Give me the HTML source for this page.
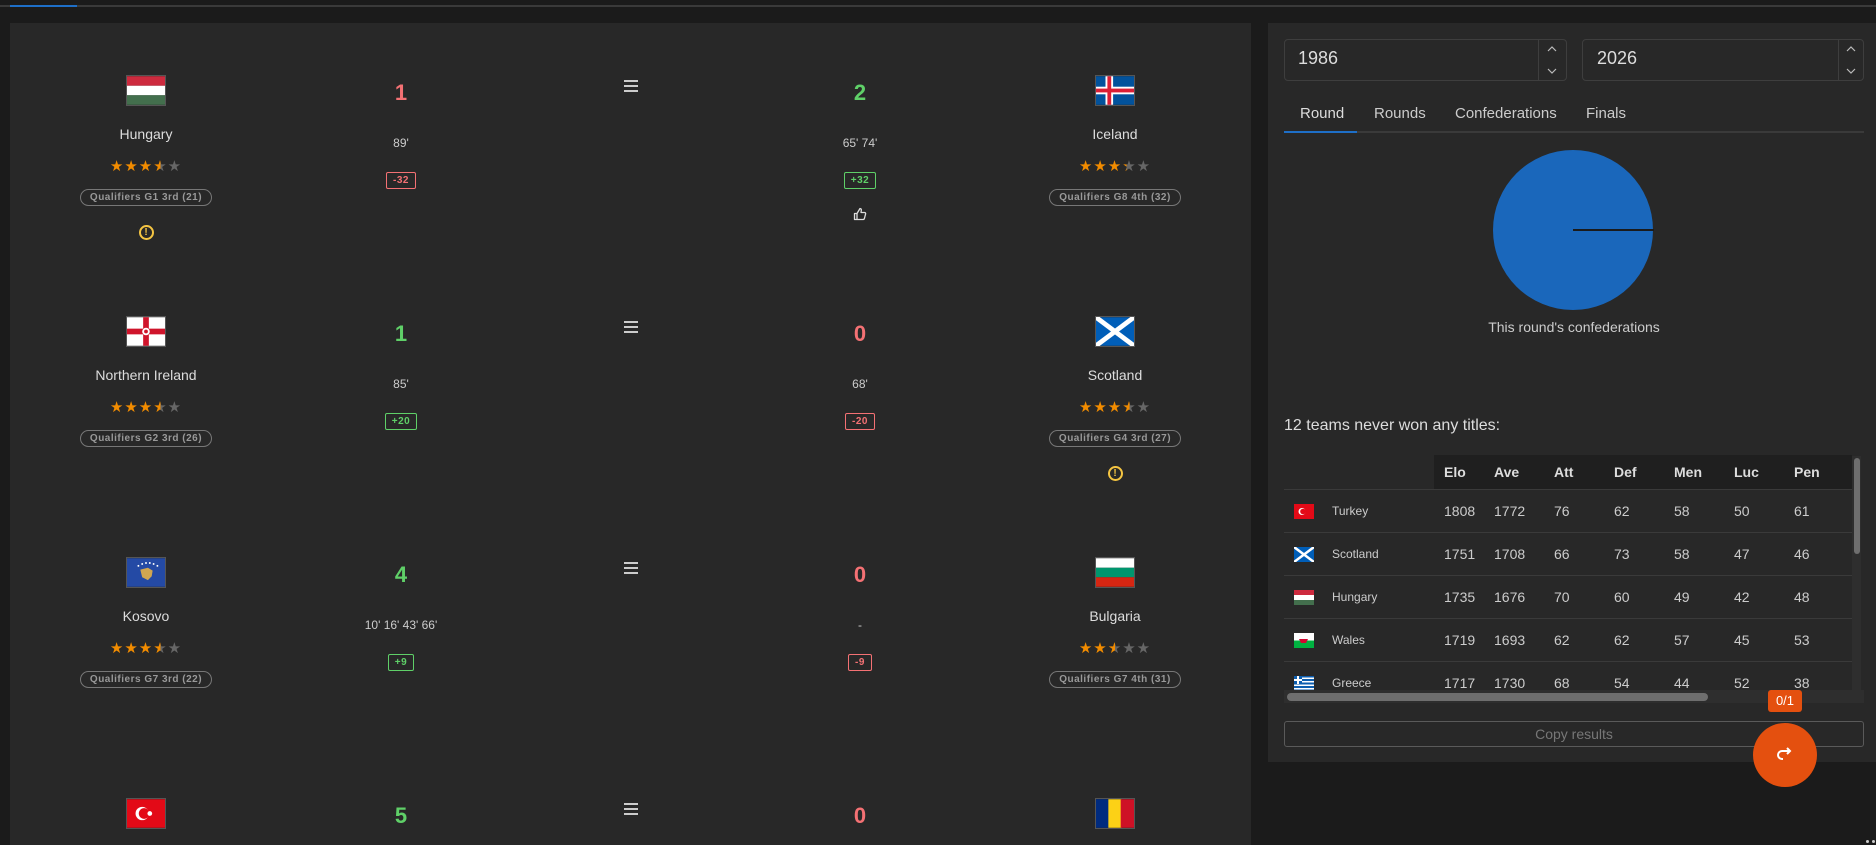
<!DOCTYPE html>
<html><head><meta charset="utf-8"><style>
*{margin:0;padding:0;box-sizing:border-box}
body{width:1876px;height:845px;background:#1b1b1b;font-family:"Liberation Sans",sans-serif;color:#ddd;position:relative;overflow:hidden}
.a{position:absolute}
.c{position:absolute;width:260px;text-align:center}
.flag{display:block;margin:0 auto;width:40px;height:31px;border:1px solid #555}
.name{font-size:14px;color:#ddd;margin-top:20px}
.stars{font-size:15px;letter-spacing:1px;color:#f28c00;margin-top:15px}
.stars .g{color:#666}
.bw{margin-top:12px}
.badge{display:inline-block;border:1px solid #777;border-radius:9px;font-size:10px;font-weight:bold;color:#999;padding:1px 9px;line-height:13px;letter-spacing:0.5px}
.score{font-size:22px;font-weight:bold}
.red{color:#f47174}.green{color:#5fd068}
.min{font-size:12px;color:#ccc;margin-top:30px}
.dw{margin-top:20px}
.delta{display:inline-block;font-size:10px;font-weight:bold;border:1px solid;border-radius:2px;padding:1px 6px;line-height:13px;letter-spacing:0.5px}
.warn{display:inline-block;width:15px;height:15px;border:2px solid #f5c542;border-radius:50%;color:#f5c542;font-size:10px;font-weight:bold;line-height:11px}
.menu{position:absolute;width:14px;height:12px;border-top:2px solid #ccc;border-bottom:2px solid #ccc}
.menu:after{content:"";position:absolute;left:0;right:0;top:3px;border-top:2px solid #ccc}
table{border-collapse:collapse;font-size:14px;color:#ccc}
td,th{height:43px;text-align:left;padding:0}
th{height:34px;font-weight:bold;color:#ddd;background:#1f1f1f}
tr{border-bottom:1px solid #3a3a3a}
</style></head><body>
<div class="a" style="left:0;top:5px;width:1876px;height:2px;background:#3a3a3a"></div>
<div class="a" style="left:10px;top:5px;width:67px;height:2px;background:#1e6fc8"></div>

<div class="a" style="left:10px;top:23px;width:1241px;height:822px;background:#282828"></div>

<!-- ROW 1 -->
<div class="c" style="left:16px;top:75px">
<svg class="flag" viewBox="0 0 40 30"><rect width="40" height="10" fill="#cd2a3e"/><rect y="10" width="40" height="10" fill="#fff"/><rect y="20" width="40" height="10" fill="#436f4d"/></svg>
<div class="name">Hungary</div>
<div class="stars">★★★<span style="background:linear-gradient(90deg,#f28c00 50%,#666 50%);-webkit-background-clip:text;color:transparent">★</span><span class="g">★</span></div>
<div class="bw"><span class="badge">Qualifiers G1 3rd (21)</span></div>
<div style="margin-top:16px"><span class="warn">!</span></div>
</div>
<div class="c" style="left:271px;top:80px"><div class="score red">1</div><div class="min">89'</div><div class="dw"><span class="delta red">-32</span></div></div>
<div class="menu" style="left:624px;top:80px"></div>
<div class="c" style="left:730px;top:80px"><div class="score green">2</div><div class="min">65' 74'</div><div class="dw"><span class="delta green">+32</span></div><div style="margin-top:18px"><svg width="14" height="14" viewBox="0 0 14 14"><path d="M1.5 6.5h2.5v6h-2.5zM4 6.5l3-5c1 0 1.5 .7 1.3 1.8L8 5.5h3.5c.8 0 1.3.7 1.1 1.4l-1.2 4.6c-.2.6-.6 1-1.2 1H4" fill="none" stroke="#ddd" stroke-width="1.3" stroke-linejoin="round"/></svg></div></div>
<div class="c" style="left:985px;top:75px">
<svg class="flag" viewBox="0 0 40 30"><rect width="40" height="30" fill="#02529c"/><rect x="10" width="8" height="30" fill="#fff"/><rect y="11" width="40" height="8" fill="#fff"/><rect x="12" width="4" height="30" fill="#dc1e35"/><rect y="13" width="40" height="4" fill="#dc1e35"/></svg>
<div class="name">Iceland</div>
<div class="stars">★★★<span style="background:linear-gradient(90deg,#f28c00 30%,#666 30%);-webkit-background-clip:text;color:transparent">★</span><span class="g">★</span></div>
<div class="bw"><span class="badge">Qualifiers G8 4th (32)</span></div>
</div>

<!-- ROW 2 -->
<div class="c" style="left:16px;top:316px">
<svg class="flag" viewBox="0 0 40 30"><rect width="40" height="30" fill="#fff"/><rect x="17" width="6" height="30" fill="#cf142b"/><rect y="12" width="40" height="6" fill="#cf142b"/><circle cx="20" cy="15" r="4" fill="#fff"/><circle cx="20" cy="15" r="2" fill="#cf142b"/></svg>
<div class="name">Northern Ireland</div>
<div class="stars">★★★<span style="background:linear-gradient(90deg,#f28c00 50%,#666 50%);-webkit-background-clip:text;color:transparent">★</span><span class="g">★</span></div>
<div class="bw"><span class="badge">Qualifiers G2 3rd (26)</span></div>
</div>
<div class="c" style="left:271px;top:321px"><div class="score green">1</div><div class="min">85'</div><div class="dw"><span class="delta green">+20</span></div></div>
<div class="menu" style="left:624px;top:321px"></div>
<div class="c" style="left:730px;top:321px"><div class="score red">0</div><div class="min red">68'</div><div class="dw"><span class="delta red">-20</span></div></div>
<div class="c" style="left:985px;top:316px">
<svg class="flag" viewBox="0 0 40 30"><rect width="40" height="30" fill="#005eb8"/><path d="M0 0L40 30M40 0L0 30" stroke="#fff" stroke-width="5"/></svg>
<div class="name">Scotland</div>
<div class="stars">★★★<span style="background:linear-gradient(90deg,#f28c00 50%,#666 50%);-webkit-background-clip:text;color:transparent">★</span><span class="g">★</span></div>
<div class="bw"><span class="badge">Qualifiers G4 3rd (27)</span></div>
<div style="margin-top:16px"><span class="warn">!</span></div>
</div>

<!-- ROW 3 -->
<div class="c" style="left:16px;top:557px">
<svg class="flag" viewBox="0 0 40 30"><rect width="40" height="30" fill="#244aa5"/><path d="M14 12l8 -2 5 3 -1 6 -4 4 -6 -3z" fill="#d0a650"/><g fill="#fff"><circle cx="12" cy="8" r="1"/><circle cx="16" cy="6" r="1"/><circle cx="20" cy="5" r="1"/><circle cx="24" cy="5" r="1"/><circle cx="28" cy="6" r="1"/><circle cx="32" cy="8" r="1"/></g></svg>
<div class="name">Kosovo</div>
<div class="stars">★★★<span style="background:linear-gradient(90deg,#f28c00 50%,#666 50%);-webkit-background-clip:text;color:transparent">★</span><span class="g">★</span></div>
<div class="bw"><span class="badge">Qualifiers G7 3rd (22)</span></div>
</div>
<div class="c" style="left:271px;top:562px"><div class="score green">4</div><div class="min">10' 16' 43' 66'</div><div class="dw"><span class="delta green">+9</span></div></div>
<div class="menu" style="left:624px;top:562px"></div>
<div class="c" style="left:730px;top:562px"><div class="score red">0</div><div class="min">-</div><div class="dw"><span class="delta red">-9</span></div></div>
<div class="c" style="left:985px;top:557px">
<svg class="flag" viewBox="0 0 40 30"><rect width="40" height="10" fill="#fff"/><rect y="10" width="40" height="10" fill="#00966e"/><rect y="20" width="40" height="10" fill="#d62612"/></svg>
<div class="name">Bulgaria</div>
<div class="stars">★★<span style="background:linear-gradient(90deg,#f28c00 50%,#666 50%);-webkit-background-clip:text;color:transparent">★</span><span class="g">★★</span></div>
<div class="bw"><span class="badge">Qualifiers G7 4th (31)</span></div>
</div>

<!-- ROW 4 -->
<div class="c" style="left:16px;top:798px">
<svg class="flag" viewBox="0 0 40 30"><rect width="40" height="30" fill="#e30a17"/><circle cx="16" cy="15" r="7" fill="#fff"/><circle cx="18" cy="15" r="5.6" fill="#e30a17"/><circle cx="24" cy="15" r="2.5" fill="#fff"/></svg>
</div>
<div class="c" style="left:271px;top:803px"><div class="score green">5</div></div>
<div class="menu" style="left:624px;top:803px"></div>
<div class="c" style="left:730px;top:803px"><div class="score red">0</div></div>
<div class="c" style="left:985px;top:798px">
<svg class="flag" viewBox="0 0 40 30"><rect width="14" height="30" fill="#002b7f"/><rect x="13" width="14" height="30" fill="#fcd116"/><rect x="26" width="14" height="30" fill="#ce1126"/></svg>
</div>

<!-- RIGHT PANEL -->
<div class="a" style="left:1268px;top:23px;width:608px;height:739px;background:#282828"></div>
<div class="a" style="left:1284px;top:39px;width:283px;height:42px;border:1px solid #3e3e3e;border-radius:4px"></div>
<div class="a" style="left:1298px;top:48px;font-size:18px;color:#ddd">1986</div>
<div class="a" style="left:1538px;top:39px;width:1px;height:42px;background:#3e3e3e"></div>
<svg class="a" style="left:1546px;top:44px" width="12" height="32"><path d="M2 7l4-4 4 4M2 25l4 4 4-4" fill="none" stroke="#bbb" stroke-width="1.2"/></svg>
<div class="a" style="left:1582px;top:39px;width:282px;height:42px;border:1px solid #3e3e3e;border-radius:4px"></div>
<div class="a" style="left:1597px;top:48px;font-size:18px;color:#ddd">2026</div>
<div class="a" style="left:1838px;top:39px;width:1px;height:42px;background:#3e3e3e"></div>
<svg class="a" style="left:1845px;top:44px" width="12" height="32"><path d="M2 7l4-4 4 4M2 25l4 4 4-4" fill="none" stroke="#bbb" stroke-width="1.2"/></svg>

<div class="a" style="left:1300px;top:105px;font-size:15px;color:#ddd">Round</div>
<div class="a" style="left:1374px;top:105px;font-size:15px;color:#ccc">Rounds</div>
<div class="a" style="left:1455px;top:105px;font-size:15px;color:#ccc">Confederations</div>
<div class="a" style="left:1586px;top:105px;font-size:15px;color:#ccc">Finals</div>
<div class="a" style="left:1284px;top:131px;width:580px;height:2px;background:#3a3a3a"></div>
<div class="a" style="left:1284px;top:131px;width:73px;height:2px;background:#1e6fc8"></div>

<svg class="a" style="left:1490px;top:148px" width="166" height="164"><ellipse cx="83" cy="82" rx="80" ry="80" fill="#1a67bb"/><line x1="83" y1="82" x2="164" y2="82" stroke="#1b1b1b" stroke-width="2"/></svg>
<div class="a" style="left:1484px;top:319px;width:180px;text-align:center;font-size:14px;color:#ccc">This round's confederations</div>

<div class="a" style="left:1284px;top:417px;font-size:16px;color:#ddd">12 teams never won any titles:</div>

<div class="a" style="left:1284px;top:455px;width:580px;height:235px;overflow:hidden">
<table style="width:568px">
<tr><th style="width:150px;background:#282828"></th><th style="width:60px;padding-left:10px">Elo</th><th style="width:60px">Ave</th><th style="width:60px">Att</th><th style="width:60px">Def</th><th style="width:60px">Men</th><th style="width:60px">Luc</th><th>Pen</th></tr>
<tr><td><svg style="margin:0 18px 0 10px;vertical-align:middle" width="20" height="15" viewBox="0 0 40 30"><rect width="40" height="30" fill="#e30a17"/><circle cx="16" cy="15" r="7" fill="#fff"/><circle cx="18" cy="15" r="5.6" fill="#e30a17"/></svg><span style="font-size:12px">Turkey</span></td><td style="padding-left:10px">1808</td><td>1772</td><td>76</td><td>62</td><td>58</td><td>50</td><td>61</td></tr>
<tr><td><svg style="margin:0 18px 0 10px;vertical-align:middle" width="20" height="15" viewBox="0 0 40 30"><rect width="40" height="30" fill="#005eb8"/><path d="M0 0L40 30M40 0L0 30" stroke="#fff" stroke-width="5"/></svg><span style="font-size:12px">Scotland</span></td><td style="padding-left:10px">1751</td><td>1708</td><td>66</td><td>73</td><td>58</td><td>47</td><td>46</td></tr>
<tr><td><svg style="margin:0 18px 0 10px;vertical-align:middle" width="20" height="15" viewBox="0 0 40 30"><rect width="40" height="10" fill="#cd2a3e"/><rect y="10" width="40" height="10" fill="#fff"/><rect y="20" width="40" height="10" fill="#436f4d"/></svg><span style="font-size:12px">Hungary</span></td><td style="padding-left:10px">1735</td><td>1676</td><td>70</td><td>60</td><td>49</td><td>42</td><td>48</td></tr>
<tr><td><svg style="margin:0 18px 0 10px;vertical-align:middle" width="20" height="15" viewBox="0 0 40 30"><rect width="40" height="15" fill="#fff"/><rect y="15" width="40" height="15" fill="#00b140"/><path d="M10 12h18l-4 8h-10z" fill="#d30731"/></svg><span style="font-size:12px">Wales</span></td><td style="padding-left:10px">1719</td><td>1693</td><td>62</td><td>62</td><td>57</td><td>45</td><td>53</td></tr>
<tr><td><svg style="margin:0 18px 0 10px;vertical-align:middle" width="20" height="15" viewBox="0 0 40 30"><rect width="40" height="30" fill="#0d5eaf"/><g fill="#fff"><rect y="3" width="40" height="3"/><rect y="10" width="40" height="3"/><rect y="17" width="40" height="3"/><rect y="24" width="40" height="3"/></g><rect width="16" height="16" fill="#0d5eaf"/><rect x="6" width="4" height="16" fill="#fff"/><rect y="6" width="16" height="4" fill="#fff"/></svg><span style="font-size:12px">Greece</span></td><td style="padding-left:10px">1717</td><td>1730</td><td>68</td><td>54</td><td>44</td><td>52</td><td>38</td></tr>
</table>
</div>
<div class="a" style="left:1284px;top:690px;width:580px;height:13px;background:#2e2e2e"></div>
<div class="a" style="left:1287px;top:693px;width:421px;height:8px;border-radius:4px;background:#6e6e6e"></div>
<div class="a" style="left:1852px;top:456px;width:9px;height:234px;background:#2e2e2e"></div>
<div class="a" style="left:1854px;top:458px;width:6px;height:96px;border-radius:3px;background:#6e6e6e"></div>

<div class="a" style="left:1284px;top:721px;width:580px;height:26px;border:1px solid #5a5a5a;border-radius:3px;text-align:center;font-size:14px;line-height:24px;color:#777">Copy results</div>
<div class="a" style="left:1768px;top:690px;width:34px;height:22px;background:#e4500f;border-radius:3px;color:#fff;font-size:13px;text-align:center;line-height:22px">0/1</div>
<div class="a" style="left:1753px;top:723px;width:64px;height:64px;border-radius:50%;background:#e4500f"></div>
<svg class="a" style="left:1775px;top:745px" width="20" height="20" viewBox="0 0 20 20"><path d="M15 6H7a4 4 0 0 0 0 8h1M12 3l3 3-3 3" fill="none" stroke="#fff" stroke-width="2"/></svg>
<div class="a" style="left:1866px;top:840px;width:3px;height:3px;background:#ccc;border-radius:50%"></div>
<div class="a" style="left:1872px;top:840px;width:3px;height:3px;background:#ccc;border-radius:50%"></div>
</body></html>
